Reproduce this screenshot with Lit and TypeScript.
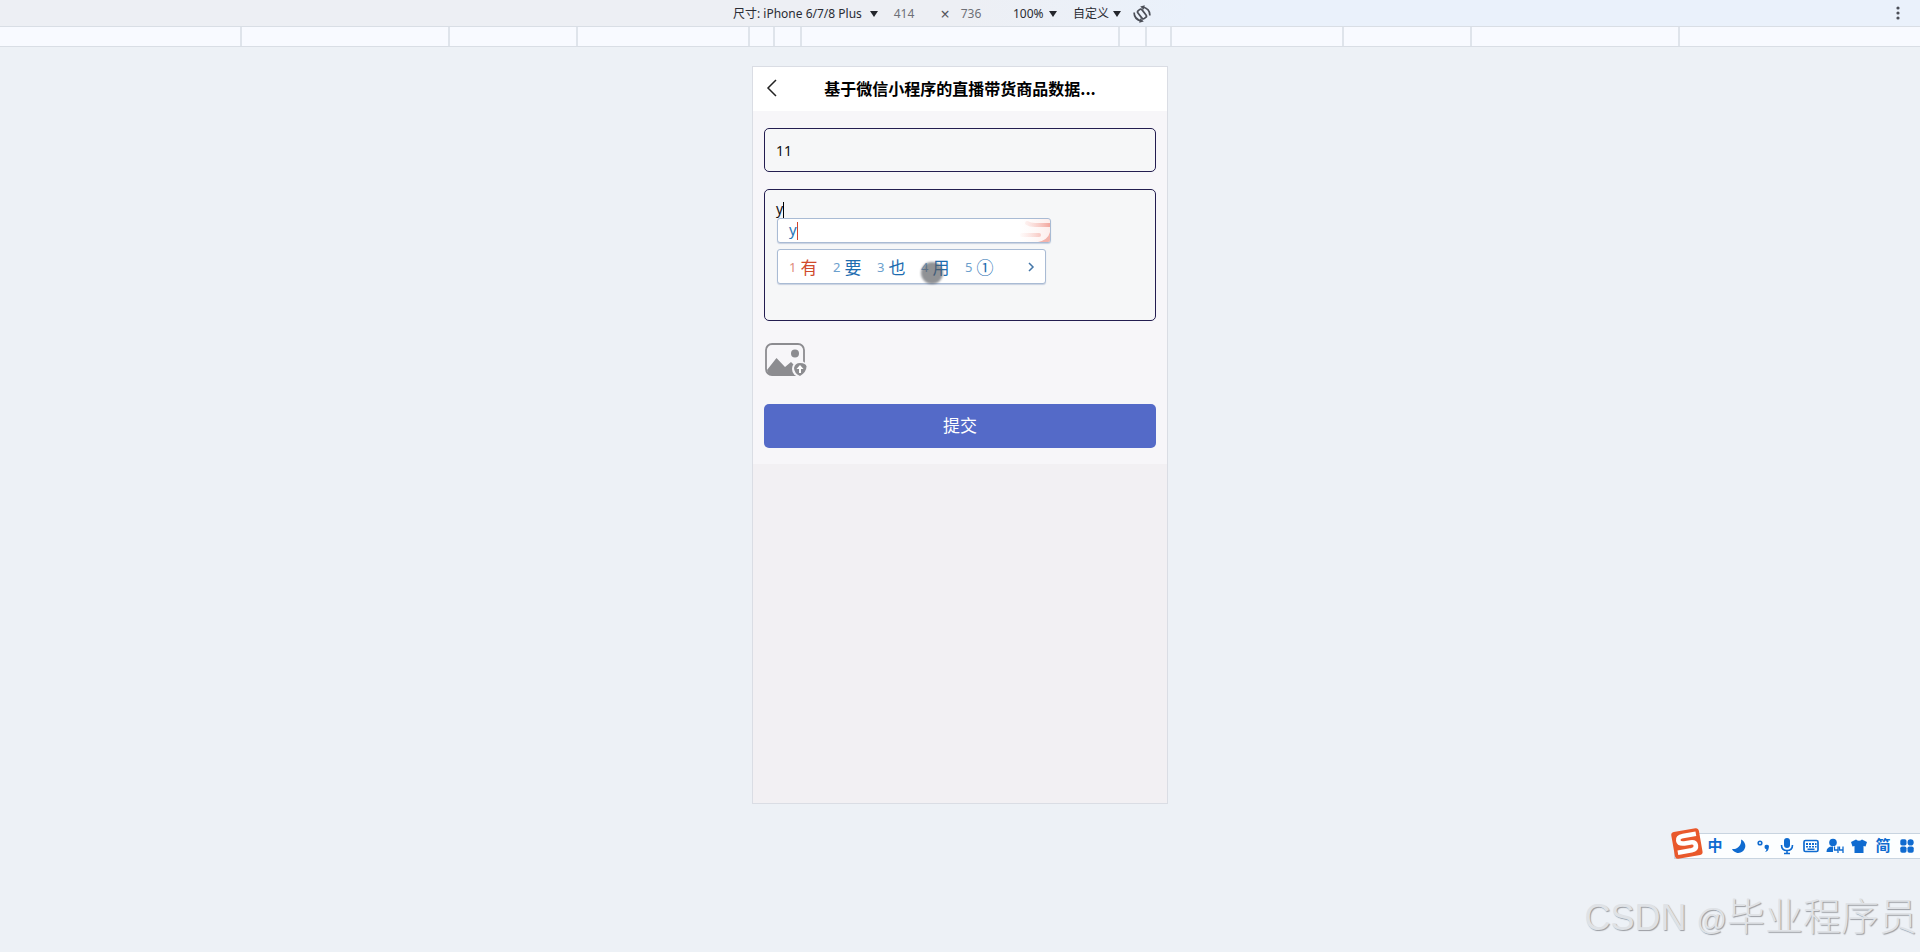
import { LitElement, html, css } from "lit";
import { customElement, state } from "lit/decorators.js";

const breakpoints = [1438, 1022, 766, 422, 372, 318];

@customElement("device-toolbar")
class DeviceToolbar extends LitElement {
  static styles = css`
    :host {
      display: block;
      font: 13px/26px "Noto Sans", "Noto Sans CJK SC", sans-serif;
      color: #2a2c33;
    }
    .bar {
      position: relative;
      display: flex;
      justify-content: center;
      align-items: center;
      box-sizing: border-box;
      height: 27px;
      padding: 1px 36px 0 0;
      background: linear-gradient(90deg, #edeff4 50%, #eaf1fb 62%);
      border-bottom: 1px solid #d9dee5;
    }
    select {
      appearance: none;
      border: 0;
      margin: 0;
      padding: 0;
      font: inherit;
      font-size: 12px;
      color: inherit;
      width: 100%;
      height: 26px;
      background: transparent;
    }
    .pick {
      position: relative;
      display: flex;
      align-items: center;
    }
    .pick::after {
      content: "";
      position: absolute;
      right: 0;
      border: 4px solid transparent;
      border-top: 6px solid #24262c;
      border-bottom: 0;
      pointer-events: none;
    }
    .device { width: 145px; }
    .zoom { margin-left: 24px; width: 44px; }
    .mode { margin-left: 16px; width: 48px; }
    input {
      width: 36px;
      height: 26px;
      border: 0;
      margin: 0;
      padding: 0;
      background: transparent;
      font: inherit;
      font-size: 12px;
      color: #6e7077;
      text-align: center;
    }
    .w { margin-left: 8px; }
    .times { width: 16px; margin: 0 0 0 15px; text-align: center; font-size: 16px; color: #55575e; }
    button {
      border: 0;
      padding: 0;
      background: transparent;
      display: flex;
      color: #4b4e57;
    }
    .rotate { margin-left: 12px; }
    .more {
      position: absolute;
      right: 14px;
      top: 5px;
    }
    .ruler {
      height: 19px;
      background: #f8faff;
      border-bottom: 1px solid #d9dee5;
      display: grid;
      justify-content: center;
    }
    .range {
      grid-area: 1 / 1;
      justify-self: center;
      box-sizing: border-box;
      height: 19px;
      border: 2px solid #dfe4eb;
      border-width: 0 2px;
    }
  `;

  render() {
    return html`
      <div class="bar">
        <label class="pick device">
          <select aria-label="尺寸"><option>尺寸: iPhone 6/7/8 Plus</option></select>
        </label>
        <input class="w" aria-label="宽度" value="414" />
        <span class="times">×</span>
        <input aria-label="高度" value="736" />
        <label class="pick zoom">
          <select aria-label="缩放"><option>100%</option></select>
        </label>
        <label class="pick mode">
          <select aria-label="模式"><option>自定义</option></select>
        </label>
        <button class="rotate" aria-label="旋转">
          <svg width="18" height="18" viewBox="0 0 18 18" fill="none" stroke="currentColor" stroke-width="1.7">
            <rect x="6.4" y="4" width="5.200" height="10" rx="1.800" transform="rotate(-38 9 9)" />
            <path d="M1.200 7.500q-.4 6.500 7.300 8.700M16.800 10.500q.4-6.500-7.300-8.700" />
            <path d="M7.400 13.300l3.400 3.300-4.600 1.200zM10.600 4.700L7.200 1.400 11.800.2z" fill="currentColor" stroke="none" />
          </svg>
        </button>
        <button class="more" aria-label="更多">
          <svg width="16" height="16" viewBox="0 0 16 16" fill="currentColor">
            <circle cx="8" cy="3" r="1.600" /><circle cx="8" cy="8" r="1.600" /><circle cx="8" cy="13" r="1.600" />
          </svg>
        </button>
      </div>
      <div class="ruler">
        ${breakpoints.map((w) => html`<div class="range" style="width:${w + 2}px"></div>`)}
      </div>
    `;
  }
}

@customElement("ime-candidates")
class ImeCandidates extends LitElement {
  static styles = css`
    :host {
      display: block;
      font-family: "Noto Sans", "Noto Sans CJK SC", sans-serif;
    }
    .compose, .list {
      box-sizing: border-box;
      background: #fff;
      border: 1px solid #a9bbd4;
      border-radius: 3px;
      box-shadow: 0 1px 1px #c9d1e0;
      display: flex;
      align-items: center;
    }
    .compose {
      width: 274px;
      height: 25px;
      padding-left: 11px;
      font-size: 15px;
      line-height: 20px;
      color: #2a76b8;
      overflow: hidden;
    }
    .typed { padding-bottom: 3px; }
    .caret { width: 1px; height: 18px; background: #d2432e; }
    .compose svg { margin-left: auto; }
    .list {
      width: 269px;
      height: 35px;
      margin-top: 6px;
      padding: 0 10px 0 11px;
      color: #1d6cb0;
    }
    .item { width: 44px; display: flex; align-items: center; gap: 4px; font-size: 17px; }
    .n { font-size: 13px; color: #6c9fcd; }
    .first { color: #d04a2c; }
    .first .n { color: #e08a7a; }
    .next { margin-left: auto; display: flex; }
    button { border: 0; background: transparent; padding: 0; color: #4476a8; }
  `;

  render() {
    return html`
      <div class="compose">
        <span class="typed">y</span><span class="caret"></span>
        <svg width="30" height="23" viewBox="0 0 30 23">
          <defs>
            <linearGradient id="fade" gradientUnits="userSpaceOnUse" x1="0" y1="0" x2="30" y2="0"><stop offset="0" stop-color="#fbd9d5" stop-opacity="0.100" /><stop offset="1" stop-color="#f2a79e" /></linearGradient>
          </defs>
          <rect width="30" height="23" fill="url(#fade)" opacity=".2" />
          <path d="M30 6H15q-5 0-8-2M2 16h17" fill="none" stroke="url(#fade)" stroke-width="4" stroke-linecap="round" />
          <path d="M30 13v10H18q10-2 12-10z" fill="#f3b3ab" />
        </svg>
      </div>
      <div class="list">
        ${["有", "要", "也", "用", "①"].map(
          (c, i) => html`<span class="item ${i === 0 ? "first" : ""}"><span class="n">${i + 1}</span>${c}</span>`
        )}
        <button class="next" aria-label="下一页">
          <svg width="8" height="12" viewBox="0 0 8 12" fill="none" stroke="currentColor" stroke-width="1.500"><path d="M2 2l4 4-4 4" /></svg>
        </button>
      </div>
    `;
  }
}

@customElement("ime-bar")
class ImeBar extends LitElement {
  static styles = css`
    :host { display: block; }
    .bar {
      display: flex;
      align-items: center;
      height: 24px;
      padding-left: 28px;
      background: #fcfeff;
      border: 1px solid #c8d4e0;
      border-right: 0;
      color: #0f6bd0;
      font: bold 15px/22px "Noto Sans CJK SC", sans-serif;
    }
    button {
      width: 24px;
      height: 24px;
      flex: none;
      border: 0;
      padding: 0;
      background: transparent;
      font: inherit;
      color: inherit;
      display: flex;
      align-items: center;
      justify-content: center;
    }
    .logo { position: absolute; left: -4px; top: -6px; }
    .zh { padding-bottom: 2px; }
    .bar > button:last-child { margin-right: 1px; }
  `;

  render() {
    return html`
      <div class="bar">
        <svg class="logo" width="34" height="34" viewBox="0 0 34 34">
          <g transform="rotate(-10 17 17)">
            <rect x="3" y="3" width="28" height="27" rx="3" fill="#e9592c" />
            <path d="M27.500 8.500H14.500q-5.500 0-5.500 3.600T14.500 16h6q5 0 5 3.900t-5 4.100H6.500" fill="none" stroke="#fff" stroke-width="4.600" />
          </g>
        </svg>
        <button class="zh">中</button>
        <button aria-label="月亮">
          <svg width="16" height="16" viewBox="0 0 16 16" fill="currentColor"><path d="M10 1.500A7 7 0 1 1 1 11 8 8 0 0 0 10 1.500z" /></svg>
        </button>
        <button aria-label="标点">
          <svg width="16" height="16" viewBox="0 0 16 16"><circle cx="5" cy="5" r="1.800" fill="none" stroke="currentColor" stroke-width="1.600" /><path d="M9.500 9a2.200 2.200 0 1 1 4.300.5q-.3 4-3.800 4.500 1.400-1.200 1.400-2.700A2.200 2.200 0 0 1 9.500 9z" fill="currentColor" /></svg>
        </button>
        <button aria-label="语音">
          <svg width="16" height="18" viewBox="0 0 16 18"><rect x="5" y="1" width="6" height="10" rx="3" fill="currentColor" /><path d="M2.500 8q0 5.500 5.500 5.500T13.500 8M8 13v3.500M5 16.500h6" fill="none" stroke="currentColor" stroke-width="1.600" /></svg>
        </button>
        <button aria-label="键盘">
          <svg width="16" height="14" viewBox="0 0 16 14"><rect x="1" y="1.500" width="14" height="11" rx="1.500" fill="none" stroke="currentColor" stroke-width="1.700" /><path d="M3 4h2v2H3zM6 4h2v2H6zM9 4h2v2H9zM12 4h1.500v2H12zM3 7h2v1.600H3zM6 7h2v1.600H6zM9 7h2v1.600H9zM12 7h1.500v1.600H12zM4.500 9.600h7v1.400h-7z" fill="currentColor" /></svg>
        </button>
        <button aria-label="用户">
          <svg width="18" height="16" viewBox="0 0 18 16"><circle cx="7" cy="4.500" r="3.800" fill="currentColor" /><path d="M.5 14q0-5.500 6-5.500h2.500V14z" fill="currentColor" /><rect x="7" y="8" width="11" height="8" fill="#fcfeff" /><path d="M8.500 8.500v3.500h3.500m0-3.500v6.500M13.500 8.500v3.500H17m0-3.500v6.500" fill="none" stroke="currentColor" stroke-width="1.300" /></svg>
        </button>
        <button aria-label="皮肤">
          <svg width="16" height="16" viewBox="0 0 16 16" fill="currentColor"><path d="M5 1.500q3 2.500 6 0L16 4l-1.500 4.500-2-.5V15h-9V8l-2 .5L0 4z" /></svg>
        </button>
        <button class="zh">简</button>
        <button aria-label="工具">
          <svg width="14" height="14" viewBox="0 0 14 14" fill="currentColor"><rect x=".3" y=".3" width="6.200" height="6.200" rx="1.800" /><circle cx="10.600" cy="3.400" r="3.100" /><rect x=".3" y="7.500" width="6.200" height="6.200" rx="1.800" /><rect x="7.500" y="7.500" width="6.200" height="6.200" rx="1.800" /></svg>
        </button>
      </div>
    `;
  }
}

@customElement("app-root")
class AppRoot extends LitElement {
  @state() private heading = "基于微信小程序的直播带货商品数据...";

  static styles = css`
    :host {
      display: block;
      position: relative;
      min-height: 100vh;
      background: #edf1f6;
      font-family: "Noto Sans", "Noto Sans CJK SC", sans-serif;
    }
    .phone {
      width: 414px;
      min-height: 736px;
      margin: 19px auto 0;
      background: #f2f0f3;
      border: 1px solid #dadde4;
    }
    header {
      display: grid;
      grid-template-columns: 60px 1fr 60px;
      align-items: center;
      height: 44px;
      background: #fff;
    }
    .back { border: 0; padding: 0 0 2px 13px; background: transparent; display: flex; }
    h1 {
      margin: 0;
      padding-bottom: 3px;
      font: bold 16px/24px "Noto Sans CJK SC", sans-serif;
      color: #000;
      text-align: center;
      white-space: nowrap;
    }
    form {
      display: flex;
      flex-direction: column;
      padding: 17px 11px 16px;
      background: #f7f6f9;
    }
    .field {
      box-sizing: border-box;
      width: 100%;
      margin: 0;
      border: 1px solid #231d50;
      border-radius: 5px;
      background: #f6f7f8;
      font: 14px/20px "Noto Sans", sans-serif;
      color: #111;
      outline: 0;
      display: block;
    }
    input.field { height: 44px; padding: 0 11px; }
    .area { position: relative; margin-top: 17px; }
    textarea.field { height: 132px; padding: 9px 11px; resize: none; }
    .caret { position: absolute; left: 19px; top: 13px; width: 1px; height: 16px; background: #000; }
    ime-candidates { position: absolute; left: 13px; top: 29px; }
    .pointer {
      position: absolute;
      left: 157px;
      top: 73px;
      width: 22px;
      height: 22px;
      border-radius: 50%;
      background: #55585e;
      opacity: .65;
      filter: blur(1px);
    }
    .upload { align-self: flex-start; margin-top: 20px; border: 0; padding: 0; background: transparent; display: flex; }
    .submit {
      height: 44px;
      margin-top: 25px;
      border: 0;
      border-radius: 5px;
      background: #546ac8;
      color: #fff;
      font: 17px/24px "Noto Sans CJK SC", sans-serif;
      padding: 0 0 2px;
    }
    ime-bar { position: absolute; right: 0; bottom: 93px; }
    .mark {
      position: absolute;
      right: 3px;
      bottom: 6px;
      font: 300 36px/52px "Liberation Sans", "Noto Sans CJK SC", sans-serif;
      color: #dfe2e6;
      text-shadow: 1px 1px 1px #999ca2;
      white-space: nowrap;
    }
    .at { font-size: 30px; }
    .name { font-size: 38px; }
  `;

  render() {
    return html`
      <device-toolbar></device-toolbar>
      <main class="phone">
        <header>
          <button class="back" aria-label="返回">
            <svg width="12" height="18" viewBox="0 0 12 18" fill="none" stroke="#222" stroke-width="1.500"><path d="M10 1L2 9l8 8" /></svg>
          </button>
          <h1>${this.heading}</h1>
        </header>
        <form @submit=${(e: Event) => e.preventDefault()}>
          <input class="field" aria-label="标题" value="11" />
          <div class="area">
            <textarea class="field" aria-label="内容" .value=${"y"}></textarea>
            <span class="caret"></span>
            <ime-candidates></ime-candidates>
            <span class="pointer"></span>
          </div>
          <button class="upload" type="button" aria-label="上传图片">
            <svg width="44" height="38" viewBox="0 0 44 38">
              <rect x="2" y="3" width="38" height="31" rx="6" fill="none" stroke="#8c8c90" stroke-width="1.800" />
              <circle cx="31" cy="12.500" r="4" fill="#8c8c90" />
              <path d="M3 29l9.500-12 8.500 9 6-5 4 4v9H8q-4 0-5-5z" fill="#8c8c90" />
              <circle cx="36" cy="28" r="8" fill="#f7f6f9" />
              <path d="M36 22q6 0 6.500 3.500Q42.500 31 36 35q-6-3-6-8 1-5 6-5z" fill="#8c8c90" />
              <path d="M36 24l3.500 4H37v4h-2v-4h-2.500z" fill="#fff" />
            </svg>
          </button>
          <button class="submit">提交</button>
        </form>
      </main>
      <ime-bar></ime-bar>
      <div class="mark">CSDN <span class="at">@</span><span class="name">毕业程序员</span></div>
    `;
  }
}
